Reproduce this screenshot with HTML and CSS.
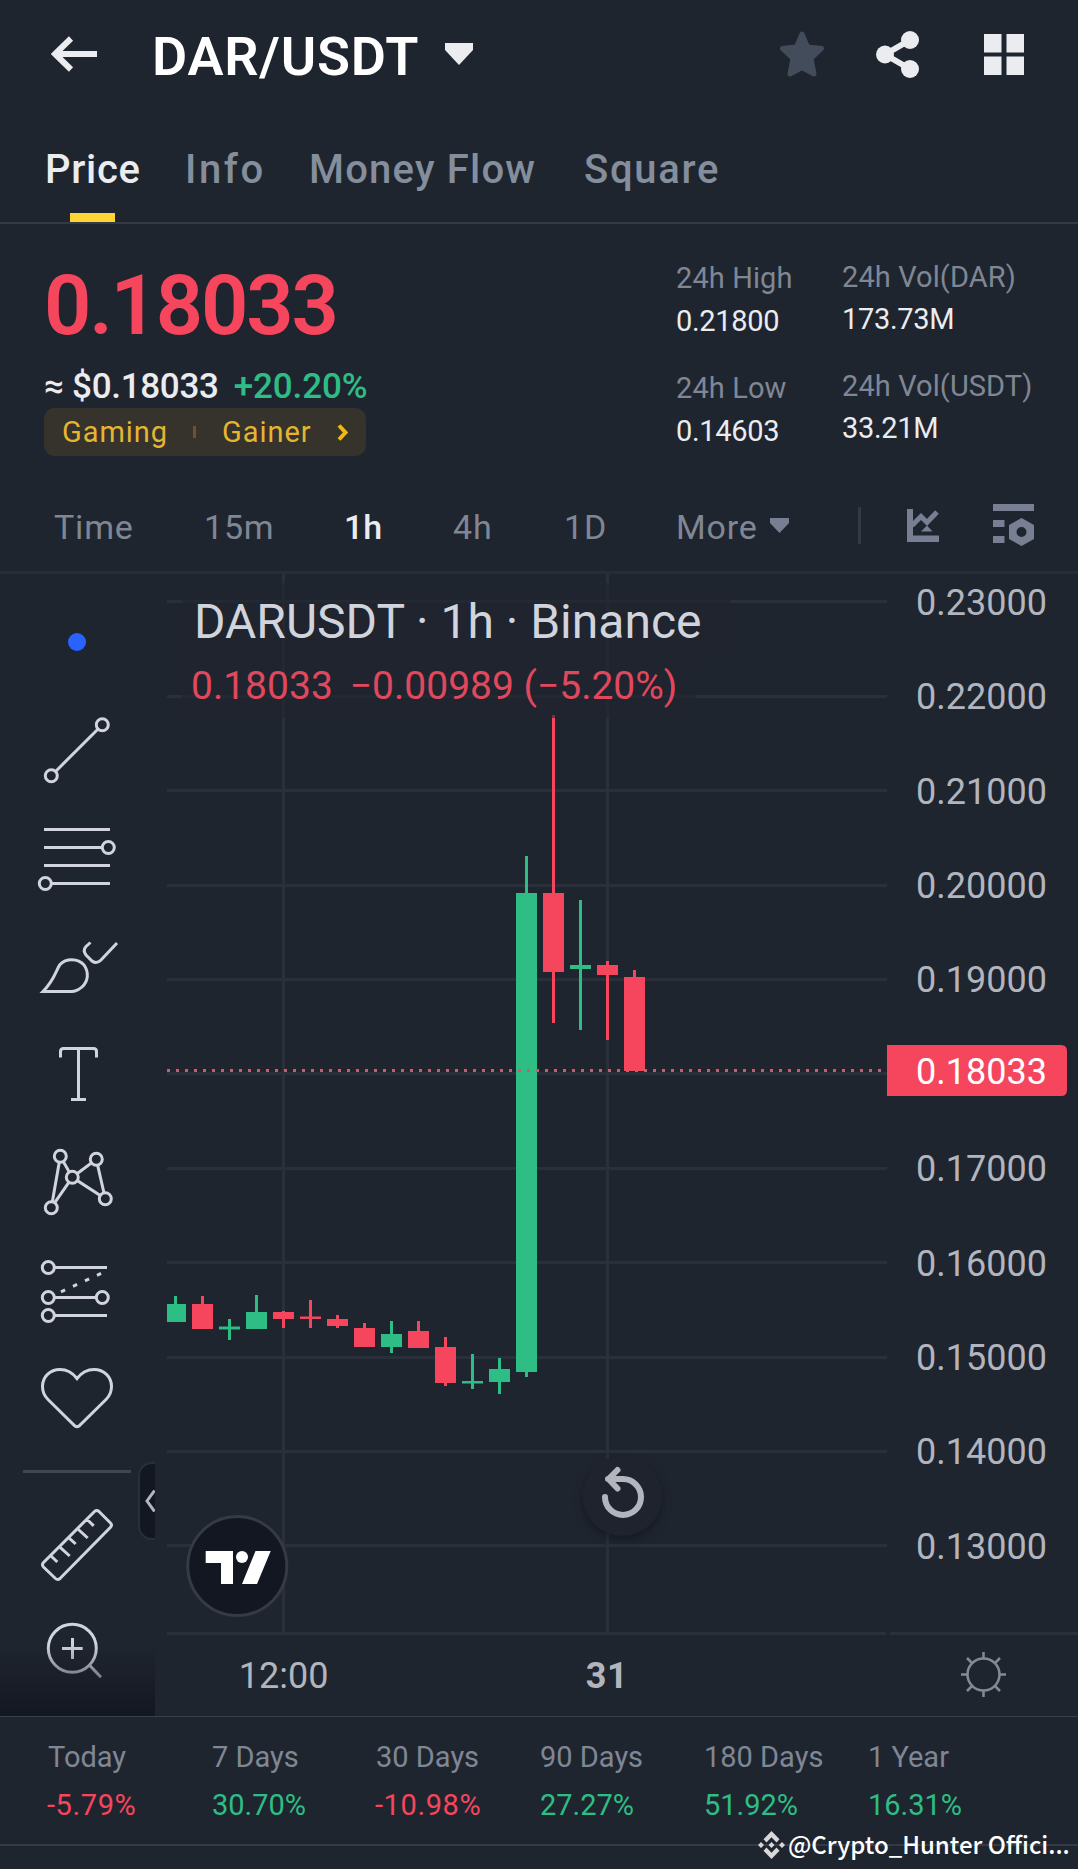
FILE: index.html
```html
<!DOCTYPE html>
<html lang="en">
<head>
    <meta charset="UTF-8">
    <meta name="viewport" content="width=device-width, initial-scale=1.0">
    <title>DAR/USDT</title>
    <link rel="stylesheet" href="styles.css">
</head>
<body>
    <header class="topbar">
        <svg class="back" width="47" height="36" viewBox="0 0 47 36"><path d="M46 18H5M20 2.5L4 18L20 33.5" fill="none" stroke="#eaecef" stroke-width="6"/></svg>
        <h1>DAR/USDT</h1>
        <svg class="caret" width="28" height="22" viewBox="0 0 28 22"><path d="M0 0H28V7L14 22L0 7Z" fill="#eaecef"/></svg>
        <div class="actions">
            <svg width="44" height="46" viewBox="0 0 44 46"><path d="M22 3L27.5 16L41.500 17.500L31 27.500L34 43L22 36.500L10 43L13 27.500L2.500 17.500L16.500 16Z" fill="#434c5a" stroke="#434c5a" stroke-width="5" stroke-linejoin="round"/></svg>
            <svg width="43" height="47" viewBox="0 0 43 47"><path d="M34 9L9 23.500L34 38" fill="none" stroke="#eaecef" stroke-width="6"/><g fill="#eaecef"><circle cx="34" cy="9" r="9"/><circle cx="9" cy="23.500" r="9"/><circle cx="34" cy="38" r="9"/></g></svg>
            <svg width="40" height="41" viewBox="0 0 40 41"><path d="M0 0H17.500V18.500H0ZM22.500 0H40V18.500H22.500ZM0 22.500H17.500V41H0ZM22.500 22.500H40V41H22.500Z" fill="#eaecef"/></svg>
        </div>
    </header>

    <nav class="tabs">
        <a class="tab active">Price</a>
        <a class="tab info">Info</a>
        <a class="tab">Money Flow</a>
        <a class="tab square">Square</a>
    </nav>

    <section class="summary">
        <div class="price-box">
            <div class="last-price">0.18033</div>
            <div class="fiat"><span class="approx">≈ $0.18033</span><span class="change">+20.20%</span></div>
            <div class="tags">
                <span>Gaming</span>
                <i></i>
                <span>Gainer</span>
                <svg width="11" height="17" viewBox="0 0 11 17"><path d="M2 1.500L8.500 8.500L2 15.500" fill="none" stroke="#f0b90b" stroke-width="4"/></svg>
            </div>
        </div>
        <div class="stats">
            <div class="stat"><span>24h High</span><b>0.21800</b></div>
            <div class="stat"><span>24h Low</span><b>0.14603</b></div>
        </div>
        <div class="stats vol">
            <div class="stat"><span>24h Vol(DAR)</span><b>173.73M</b></div>
            <div class="stat"><span>24h Vol(USDT)</span><b>33.21M</b></div>
        </div>
    </section>

    <div class="intervals">
        <span>Time</span>
        <span>15m</span>
        <span class="on">1h</span>
        <span>4h</span>
        <span>1D</span>
        <span class="more">More<svg width="19" height="15" viewBox="0 0 19 15"><path d="M0 0H19V5L9.500 15L0 5Z" fill="#787f93"/></svg></span>
        <i class="sep"></i>
        <svg width="32" height="33" viewBox="0 0 32 33"><path d="M0 0H6V26.500H32V33H0Z" fill="#787f93"/><path d="M5 16.500L14 7.500L20 13.500L30 3" fill="none" stroke="#787f93" stroke-width="5"/><path d="M20 16.500L25.500 22.500H14Z" fill="#787f93"/></svg>
        <svg width="41" height="42" viewBox="0 0 41 42"><path d="M0 0H41V7H0ZM0 16H11.500V23H0ZM0 32H11.500V39H0Z" fill="#787f93"/><path fill-rule="evenodd" d="M28.500 14L41 21V35L28.500 42L16 35V21ZM28.500 23A5 5 0 1 0 28.500 33A5 5 0 1 0 28.500 23Z" fill="#787f93"/></svg>
    </div>

    <main class="chart">
        <aside class="tools">
            <svg viewBox="0 0 84 84"><circle class="dot" cx="42" cy="42" r="9"/></svg>
            <!-- trend line -->
            <svg viewBox="0 0 84 84"><path d="M20.800 63.200L62.800 21.200"/><circle cx="67.300" cy="16.700" r="6"/><circle cx="16.300" cy="67.700" r="6"/></svg>
            <!-- fib retracement -->
            <svg viewBox="0 0 84 84"><path d="M9 13.500H75M9 31.500H67M9 49.500H75M17 67.500H75"/><circle cx="73.300" cy="31.500" r="6"/><circle cx="10.300" cy="67.500" r="6"/></svg>
            <!-- brush -->
            <svg viewBox="0 0 84 84"><path d="M55.500 18.500L51 22.500Q47.500 26.500 51 31L57 37Q61.500 40.500 66 36L82 19M8 67.500C20 55 21 46 25 40.500C31 34 43 34 49 41C54 48 53.500 57 47 63C42 67.500 38 67.500 33 67.500Z"/></svg>
            <!-- text -->
            <svg viewBox="0 0 84 84"><path d="M25.500 25.500V19.500Q25.500 16.500 28.500 16.500H58.500Q61.500 16.500 61.500 19.500V25.500M43.500 16.500V67.500M36 67.500H51"/></svg>
            <!-- pattern -->
            <svg viewBox="0 0 84 84"><path d="M25.300 16.300L16.300 67.700L37.300 37.300ZM37.300 37.300L61.300 19.300L70.300 58.700Z"/><circle cx="25.300" cy="16.300" r="6"/><circle cx="61.300" cy="19.300" r="6"/><circle cx="37.300" cy="37.300" r="6"/><circle cx="16.300" cy="67.700" r="6"/><circle cx="70.300" cy="58.700" r="6"/></svg>
            <!-- projection -->
            <svg viewBox="0 0 84 84"><path d="M19 19.500H72M19 49.500H62M19 67.500H72"/><path d="M26 43.800L68 24.500" stroke-dasharray="4.500 8.700"/><circle cx="13.300" cy="19.500" r="6"/><circle cx="13.300" cy="49.500" r="6"/><circle cx="67.300" cy="49.500" r="6"/><circle cx="13.300" cy="67.500" r="6"/></svg>
            <!-- favourites -->
            <svg viewBox="0 0 84 84"><path d="M42 22.500C37 16 31 13.500 25 13.500C15 13.500 7.500 21 7.500 30.500C7.500 35.500 9.500 40 13 43.500L40 70Q42 71.500 44 70L71 43.500C74.500 40 76.500 35.500 76.500 30.500C76.500 21 69 13.500 59 13.500C53 13.500 47 16 42 22.500Z"/></svg>
            <hr>
            <!-- ruler -->
            <svg viewBox="0 0 84 84"><path d="M59.500 8.500Q61.700 6.500 64 8.500L75.500 20Q77.500 22 75.500 24.300L25 75.500Q22.700 77.500 20.500 75.500L8.500 64Q6.500 61.700 8.500 59.500ZM15.500 52.500L22.300 59M24.300 43.700L34.700 53M33.300 34.300L40.700 41M42.300 25.500L52.700 35M51.700 16L58.700 22.800"/></svg>
            <!-- zoom in -->
            <svg viewBox="0 0 84 84"><circle cx="37.300" cy="37.300" r="24"/><path d="M27 37.500H47.700M37.500 27V48M55 54.700L66 66.300"/></svg>
            <div class="fade"></div>
            <div class="collapse"><svg width="10" height="24" viewBox="0 0 10 24"><path d="M9.500 1.500L2 12L9.500 22.500" fill="none" stroke="#b2b5be" stroke-width="3"/></svg></div>
        </aside>

        <div class="plot">
            <svg width="923" height="1142" viewBox="155 574 923 1142">
                <path class="grid" d="M283.500 574V1632M607.500 574V1632M167 601.500H887M167 696.500H887M167 790.500H887M167 885.500H887M167 979.500H887M167 1073.500H887M167 1168.500H887M167 1262.500H887M167 1357.500H887M167 1451.500H887M167 1545.500H887"/>
                <path class="grid" d="M167 1633.500H886M890 1633.500H1078"/>

                <path class="up" d="M167 1304h19v18h-19zM174 1296h3v8h-3zM219 1326.500h21v3h-21zM228 1319h3v21h-3zM246 1312h21v17h-21zM255 1295h3v17h-3zM381 1334h21v13h-21zM390 1321h3v32h-3zM462 1381h21v2.500h-21zM471 1354h3v35h-3zM489 1369h21v13h-21zM498 1358h3v36h-3zM516 893h21v479h-21zM525 856h3v521h-3zM570 965h21v4h-21zM579 900h3v130h-3z"/>
                <path class="down" d="M192 1304h21v25h-21zM201 1296h3v8h-3zM273 1312h21v7h-21zM282 1311h3v17h-3zM300 1316.500h21v2.500h-21zM309 1300h3v28h-3zM327 1319h21v7h-21zM336 1315h3v13h-3zM354 1328h21v19h-21zM363 1323h3v5h-3zM408 1331h21v17h-21zM417 1321h3v10h-3zM435 1347h21v36h-21zM444 1337h3v49h-3zM543 893h21v79h-21zM552 715h3v308h-3zM597 965h21v10h-21zM606 961h3v79h-3zM624 977h21v94h-21zM633 970h3v7h-3z"/>
                <path class="last" d="M167 1070.500H887"/>

                <g class="axis">
                    <text x="916" y="614.500">0.23000</text>
                    <text x="916" y="709">0.22000</text>
                    <text x="916" y="803.500">0.21000</text>
                    <text x="916" y="898">0.20000</text>
                    <text x="916" y="992">0.19000</text>
                    <text x="916" y="1181">0.17000</text>
                    <text x="916" y="1275.500">0.16000</text>
                    <text x="916" y="1370">0.15000</text>
                    <text x="916" y="1464">0.14000</text>
                    <text x="916" y="1558.500">0.13000</text>
                    <text x="238.800" y="1687.500">12:00</text>
                    <text class="day" x="585.800" y="1687.500">31</text>
                </g>
                <path class="price-tag" d="M887 1045H1061Q1067 1045 1067 1051V1090Q1067 1096 1061 1096H887Z"/>
                <text class="tag-text" x="916" y="1084">0.18033</text>

                <g class="sun">
                    <circle cx="983.500" cy="1674.500" r="16"/>
                    <path d="M983.500 1652V1658M983.500 1691V1697M961 1674.500H967M1000 1674.500H1006M967 1658L972 1663M995 1686L1000 1691M1000 1658L995 1663M972 1686L967 1691"/>
                </g>

                <g>
                    <circle cx="237.300" cy="1566" r="49.500" fill="#131722" stroke="#363a45" stroke-width="3"/>
                    <path d="M205.700 1551H233V1584H221V1563H205.700ZM255.500 1551H270.700L257 1584H242Z" fill="#fff"/>
                    <circle cx="242" cy="1557" r="6" fill="#fff"/>
                </g>

                <g class="reset">
                    <circle cx="622.500" cy="1496" r="40"/>
                    <path d="M605 1497A18 18 0 1 0 623 1479H608M617.500 1470L608.500 1479L617.500 1488.500"/>
                </g>
            </svg>
            <div class="legend">
                <div class="symbol">DARUSDT · 1h · Binance</div>
                <div class="quote"><span>0.18033</span><span>−0.00989 (−5.20%)</span></div>
            </div>
        </div>
    </main>

    <section class="periods">
        <div><span>Today</span><b class="red">-5.79%</b></div>
        <div><span>7 Days</span><b>30.70%</b></div>
        <div><span>30 Days</span><b class="red">-10.98%</b></div>
        <div><span>90 Days</span><b>27.27%</b></div>
        <div><span>180 Days</span><b>51.92%</b></div>
        <div><span>1 Year</span><b>16.31%</b></div>
    </section>

    <div class="watermark">
        <svg width="27" height="28" viewBox="0 0 27 28"><g fill="#d8d8d8"><path d="M13.500 0L21.500 8.300L18.500 11.400L13.500 6.200L8.500 11.400L5.500 8.300Z"/><path d="M13.500 28L21.500 19.700L18.500 16.600L13.500 21.800L8.500 16.600L5.500 19.700Z"/><path d="M13.500 10.900L16.500 14L13.500 17.100L10.500 14ZM3 10.900L6 14L3 17.100L0 14ZM24 10.900L27 14L24 17.100L21 14Z"/></g></svg>
        <span>@Crypto_Hunter Offici...</span>
    </div>
</body>
</html>
```
FILE: styles.css
```css
* {
    box-sizing: border-box;
}

body {
    margin: 0;
    height: 1869px;
    position: relative;
    overflow: hidden;
    background-color: #1f252f;
    color: #eaecef;
    font-family: Roboto, "Liberation Sans", sans-serif;
}

svg {
    display: block;
    flex: none;
}

b {
    font-weight: 400;
}

/* top bar */
.topbar {
    display: flex;
    align-items: center;
    height: 108px;
    padding: 0 54px 0 51px;
}

.topbar h1 {
    margin: 6px 0 0 54px;
    width: 271px;
    font-size: 54px;
    font-weight: 600;
    line-height: 64px;
    letter-spacing: 0.8px;
    color: #fff;
}

.caret {
    margin-left: 22px;
}

.actions {
    display: flex;
    align-items: center;
    margin-left: auto;
}

.actions svg:nth-child(2) {
    margin: 0 65px 0 52px;
}

/* tabs */
.tabs {
    display: grid;
    grid-template-columns: 140px 124px 275px auto;
    height: 116px;
    padding: 38px 0 0 45px;
    border-bottom: 2px solid #333a45;
}

.tab {
    position: relative;
    font-size: 40px;
    font-weight: 500;
    line-height: 48px;
    letter-spacing: 1.2px;
    color: #848e9c;
}

.tab.active {
    letter-spacing: 0.7px;
    color: #eaecef;
}

.tab.info {
    letter-spacing: 2.6px;
}

.tab.square {
    letter-spacing: 1.7px;
}

.tab.active::after {
    content: "";
    position: absolute;
    left: 25px;
    bottom: 0;
    width: 45px;
    height: 9px;
    background-color: #fcd535;
}

/* price summary */
.summary {
    display: flex;
    height: 262px;
    padding-left: 44px;
}

.price-box {
    width: 632px;
    padding-top: 37px;
}

.last-price {
    font-size: 83px;
    font-weight: 600;
    line-height: 90px;
    letter-spacing: -2.2px;
    color: #f6465d;
}

.fiat {
    display: flex;
    gap: 15px;
    margin-top: 15px;
    font-size: 35px;
    font-weight: 500;
    line-height: 42px;
}

.approx {
    letter-spacing: -0.3px;
}

.change {
    letter-spacing: -0.1px;
    color: #2ebd85;
}

.tags {
    display: flex;
    align-items: center;
    width: 322px;
    height: 48px;
    padding-left: 18px;
    border-radius: 11px;
    background-color: #35332b;
    font-size: 29px;
    line-height: 48px;
    letter-spacing: 0.95px;
    color: #e5b532;
}

.tags i {
    width: 3px;
    height: 12px;
    margin: 0 26px 0 25px;
    background-color: #6b5623;
}

.tags svg {
    margin-left: 25px;
}

.stats {
    display: flex;
    flex-direction: column;
    gap: 27px;
    width: 166px;
    padding-top: 34px;
    font-size: 29px;
    line-height: 40px;
    white-space: nowrap;
}

.stats.vol {
    padding-top: 33px;
}

.stat span {
    display: block;
    letter-spacing: 0.1px;
    color: #7f8795;
}

.stat b {
    display: block;
    margin-top: 2px;
    letter-spacing: -0.3px;
}

.stats:not(.vol) b {
    margin-top: 3px;
}

/* interval picker */
.intervals {
    display: grid;
    grid-template-columns: 150px 140px 109px 111px 112px 182px 49px 86px 1fr;
    align-items: center;
    height: 85px;
    padding: 0 0 3px 54px;
    font-size: 34px;
    letter-spacing: 0.8px;
    color: #7f8795;
}

.intervals .on {
    font-weight: 500;
    letter-spacing: 0;
    color: #eaecef;
}

.intervals svg {
    margin-bottom: 4px;
}

.more {
    display: flex;
    align-items: center;
}

.more svg {
    margin-left: 12px;
}

.sep {
    width: 3px;
    height: 37px;
    margin-bottom: 4px;
    background-color: #333a45;
}

/* chart */
.chart {
    display: flex;
    height: 1145px;
    border-top: 3px solid #272d37;
}

.tools {
    position: relative;
    width: 155px;
    padding-top: 14px;
}

.tools > svg {
    width: 84px;
    height: 84px;
    margin: 12px 0 24px 35px;
    fill: none;
    stroke: #d1d4dc;
    stroke-width: 3;
}

.tools circle {
    fill: #1f252f;
}

.tools .dot {
    fill: #2962ff;
    stroke: none;
}

.tools hr {
    width: 108px;
    height: 3px;
    margin: 30px 0 30px 23px;
    border: 0;
    background-color: #434651;
}

.fade {
    position: absolute;
    left: 0;
    bottom: 0;
    width: 155px;
    height: 72px;
    background: linear-gradient(rgba(19, 23, 34, 0), #131722);
}

.collapse {
    position: absolute;
    right: 0;
    top: 888px;
    display: flex;
    align-items: center;
    justify-content: flex-end;
    width: 17px;
    height: 78px;
    border: 2px solid #2a2e39;
    border-right: 0;
    border-radius: 14px 0 0 14px;
    background-color: #131722;
}

.plot {
    position: relative;
}

.grid {
    fill: none;
    stroke: #2a303a;
    stroke-width: 3;
}

.up {
    fill: #2ebd85;
}

.down {
    fill: #f6465d;
}

.last {
    stroke: #cf5a6b;
    stroke-width: 3;
    stroke-dasharray: 3 6;
}

.axis {
    font-size: 36px;
    fill: #b2b5be;
}

.axis .day {
    font-weight: 700;
    letter-spacing: 0.5px;
}

.price-tag {
    fill: #f6465d;
}

.tag-text {
    font-size: 36px;
    fill: #fff;
}

.sun {
    fill: none;
    stroke: #868993;
    stroke-width: 2.5;
}

.reset circle {
    fill: #1f232e;
    filter: drop-shadow(0 4px 4px rgba(10, 12, 20, 0.5));
}

.reset path {
    fill: none;
    stroke: #b2b5be;
    stroke-width: 6;
    stroke-linecap: round;
    stroke-linejoin: round;
}

.legend {
    position: absolute;
    left: 27px;
    top: 9px;
}

.symbol {
    width: 549px;
    padding: 11px 0 10px 12px;
    background-color: rgba(31, 37, 47, 0.6);
    font-size: 48px;
    line-height: 56px;
    white-space: nowrap;
    color: #d1d4dc;
}

.quote {
    display: flex;
    gap: 17px;
    width: 514px;
    padding: 1px 0 7px 9px;
    background-color: rgba(31, 37, 47, 0.6);
    font-size: 39px;
    line-height: 50px;
    white-space: nowrap;
    color: #e0485d;
}

/* performance by period */
.periods {
    display: grid;
    grid-template-columns: repeat(6, 164px);
    height: 130px;
    padding: 20px 0 0 48px;
    border-top: 1px solid #3a414c;
    border-bottom: 2px solid #333a45;
    font-size: 29px;
    line-height: 40px;
    white-space: nowrap;
}

.periods span {
    display: block;
    color: #7f8795;
}

.periods b {
    display: block;
    margin-top: 8px;
    color: #2ebd85;
}

.periods .red {
    margin-left: -1px;
    letter-spacing: 0.6px;
    color: #f6465d;
}

.watermark {
    position: absolute;
    left: 758px;
    top: 1829px;
    display: flex;
    align-items: center;
    gap: 3px;
    height: 32px;
    font: 500 24px/32px "Noto Sans CJK SC", sans-serif;
    color: #fff;
}

.watermark span {
    margin-top: -3px;
}
```
